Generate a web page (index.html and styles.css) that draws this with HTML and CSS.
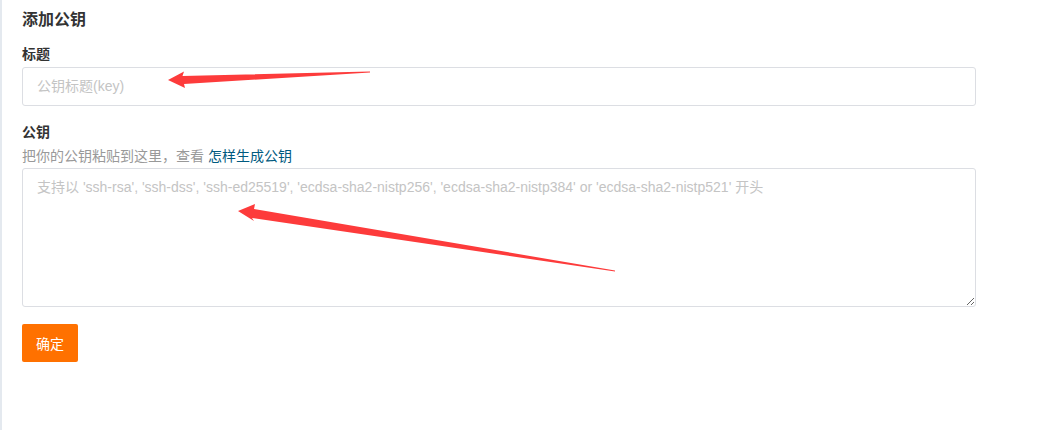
FILE: index.html
```html
<!DOCTYPE html>
<html lang="zh-CN">
<head>
<meta charset="utf-8">
<title>添加公钥</title>
<link rel="stylesheet" href="styles.css">
</head>
<body>
<div class="page">
  <h3 class="title">添加公钥</h3>
  <label class="label" for="key-title">标题</label>
  <input class="field" id="key-title" type="text" placeholder="公钥标题(key)">
  <label class="label label-key" for="key-body">公钥</label>
  <div class="help">把你的公钥粘贴到这里，查看 <a class="link" href="#">怎样生成公钥</a></div>
  <textarea class="area" id="key-body" placeholder="支持以 'ssh-rsa', 'ssh-dss', 'ssh-ed25519', 'ecdsa-sha2-nistp256', 'ecdsa-sha2-nistp384' or 'ecdsa-sha2-nistp521' 开头"></textarea>
  <button class="btn" type="button">确定</button>
  <svg class="arrows" width="1063" height="430" viewBox="0 0 1063 430" aria-hidden="true">
    <polygon fill="#fd3b3b" points="168,80 184,71.5 182.5,76 370,71.6 370,72.6 184,84 185,88"/>
    <polygon fill="#fd3b3b" points="238,211 255,204 254,209 615,270.5 615,271.5 252,218 254,221"/>
  </svg>
</div>
</body>
</html>
```

FILE: styles.css
```css
html, body {
  margin: 0;
  padding: 0;
  background: #fff;
}
body {
  font-family: "Liberation Sans", "Noto Sans CJK SC", sans-serif;
  color: #333;
}
.page {
  position: relative;
  min-height: 430px;
  box-sizing: border-box;
  border-left: 2px solid #e4e9ef;
  padding: 8px 0 0 20px;
  display: flex;
  flex-direction: column;
  align-items: flex-start;
}
.title {
  margin: 0;
  font-size: 16px;
  line-height: 24px;
  font-weight: bold;
  color: #333;
}
.label {
  margin-top: 12px;
  font-size: 14px;
  line-height: 20px;
  font-weight: bold;
  color: #333;
}
.label-key {
  margin-top: 16px;
}
.field {
  margin-top: 3px;
  width: 954px;
  height: 39px;
  box-sizing: border-box;
  border: 1px solid #dcdee3;
  border-radius: 3px;
  padding: 0 14px 2px;
  font-family: inherit;
  font-size: 14px;
  color: #333;
  outline: none;
}
.field::placeholder,
.area::placeholder {
  color: #c4c4c4;
}
.help {
  margin-top: 4px;
  font-size: 14px;
  line-height: 20px;
  color: #999;
}
.link {
  color: #005a80;
  text-decoration: none;
}
.area {
  margin-top: 2px;
  width: 954px;
  height: 139px;
  box-sizing: border-box;
  border: 1px solid #dcdee3;
  border-radius: 3px;
  padding: 8px 14px;
  font-family: inherit;
  font-size: 14px;
  line-height: 20px;
  color: #333;
  outline: none;
  resize: vertical;
}
.btn {
  margin-top: 17px;
  width: 56px;
  height: 38px;
  border: none;
  border-radius: 2px;
  background: #ff7100;
  color: #fff;
  font-family: inherit;
  font-size: 14px;
  padding: 0;
  cursor: pointer;
}
.arrows {
  position: absolute;
  left: -2px;
  top: 0;
  pointer-events: none;
}
```
